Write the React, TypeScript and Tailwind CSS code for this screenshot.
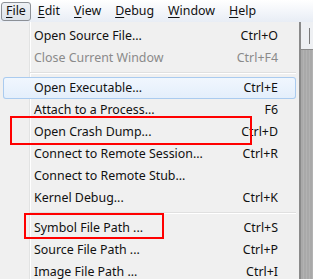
const menuBar = [
  { key: 'F', rest: 'ile', open: true },
  { key: 'E', rest: 'dit' },
  { key: 'V', rest: 'iew' },
  { key: 'D', rest: 'ebug' },
  { key: 'W', rest: 'indow' },
  { key: 'H', rest: 'elp' },
]

type Item = { label: string; shortcut?: string; disabled?: boolean; hover?: boolean } | 'sep'

const items: Item[] = [
  { label: 'Open Source File...', shortcut: 'Ctrl+O' },
  { label: 'Close Current Window', shortcut: 'Ctrl+F4', disabled: true },
  'sep',
  { label: 'Open Executable...', shortcut: 'Ctrl+E', hover: true },
  { label: 'Attach to a Process...', shortcut: 'F6' },
  { label: 'Open Crash Dump...', shortcut: 'Ctrl+D' },
  { label: 'Connect to Remote Session...', shortcut: 'Ctrl+R' },
  { label: 'Connect to Remote Stub...' },
  { label: 'Kernel Debug...', shortcut: 'Ctrl+K' },
  'sep',
  { label: 'Symbol File Path ...', shortcut: 'Ctrl+S' },
  { label: 'Source File Path ...', shortcut: 'Ctrl+P' },
  { label: 'Image File Path ...', shortcut: 'Ctrl+I' },
]

export default function App() {
  return (
    <div className="relative h-[279px] w-[313px] overflow-hidden bg-[#ababab] font-['Noto_Sans','Liberation_Sans',sans-serif] text-[12.4px] text-[#111]">
      {/* menu bar */}
      <div className="flex h-[22px] items-center bg-gradient-to-b from-white to-[#e8edf5] pl-[1px]">
        {menuBar.map((m) => (
          <div
            key={m.key}
            className={
              m.open
                ? 'flex h-[19px] items-center rounded-[3px] border border-[#8c9096] bg-gradient-to-b from-[#eef1f5] to-[#dde3eb] px-[4px]'
                : 'flex h-[19px] items-center px-[7px]'
            }
          >
            <span>
              <span className="underline underline-offset-[2px]">{m.key}</span>
              {m.rest}
            </span>
          </div>
        ))}
      </div>

      <div className="flex">
        {/* dropdown */}
        <div className="w-[299px] bg-[linear-gradient(to_right,#f0f0f0_29px,#e2e3e3_29px,#e2e3e3_30px,#ffffff_30px,#ffffff_31px,#f0f0f0_31px)] pt-[3px] pb-[10px]">
          {items.map((it, i) =>
            it === 'sep' ? (
              <div key={i} className="flex h-[8px] items-center pl-[30px] pr-[3px]">
                <div className="h-[2px] w-full border-t border-[#e0e0e0] bg-white" />
              </div>
            ) : (
              <div
                key={i}
                className={
                  'mx-[3px] flex h-[22px] items-center pl-[31px] pr-[18px] ' +
                  (it.hover
                    ? 'rounded-[3px] bg-gradient-to-b from-[#f1f7fe] to-[#e3eefb] ring-1 ring-inset ring-[#aacbef]'
                    : '') +
                  (it.disabled ? ' text-[#8a8a8a]' : '')
                }
              >
                <span>{it.label}</span>
                <span className="ml-auto">{it.shortcut}</span>
              </div>
            )
          )}
        </div>

        {/* window behind */}
        <div className="flex flex-1 flex-col border-l-2 border-[#8a8a8a]">
          <div className="flex h-[28px] justify-end border-b border-[#8a8a8a] bg-[#eef0f3] pr-[3px] pt-[6px]">
            <div className="h-[16px] w-px bg-[#7a7a7a]" />
          </div>
          <div className="flex-1 bg-[repeating-linear-gradient(to_right,#a9a9a9_0px,#a9a9a9_2px,#b2b2b2_2px,#b2b2b2_3px)]" />
        </div>
      </div>

      {/* red annotation boxes */}
      <div className="absolute left-[10px] top-[116px] h-[29px] w-[242px] border-2 border-[#ff0000]" />
      <div className="absolute left-[24px] top-[213px] h-[26px] w-[140px] border-2 border-[#ff0000]" />
    </div>
  )
}
